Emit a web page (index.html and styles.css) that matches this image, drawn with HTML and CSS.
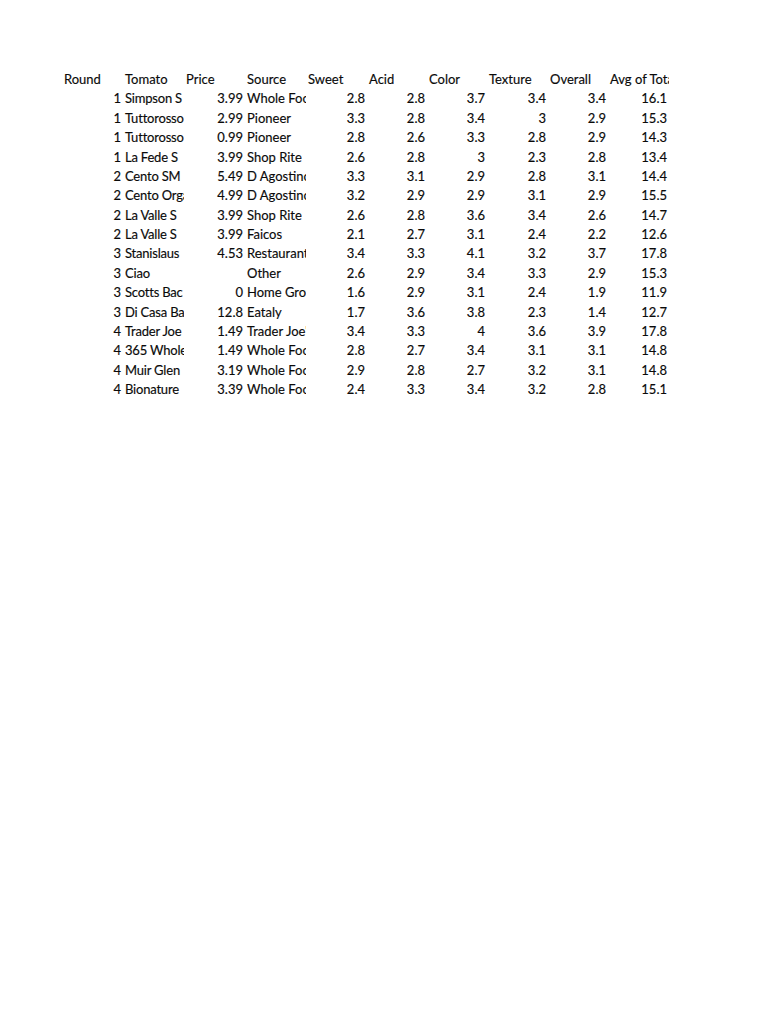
FILE: index.html
```html
<!DOCTYPE html>
<html lang="en">
<head>
<meta charset="utf-8">
<title>Tomato Tasting</title>
<link rel="stylesheet" href="styles.css">
</head>
<body>
<table class="sheet">
  <colgroup>
    <col class="w61"><col class="w61"><col class="w61"><col class="w61"><col class="w61">
    <col class="w60"><col class="w60"><col class="w61"><col class="w60"><col class="w61">
  </colgroup>
  <thead>
    <tr>
      <th>Round</th><th>Tomato</th><th>Price</th><th>Source</th><th>Sweet</th>
      <th>Acid</th><th>Color</th><th>Texture</th><th>Overall</th><th>Avg of Total</th>
    </tr>
  </thead>
  <tbody>
    <tr><td class="n">1</td><td class="t">Simpson S</td><td class="n">3.99</td><td>Whole Foods</td><td class="n">2.8</td><td class="n">2.8</td><td class="n">3.7</td><td class="n">3.4</td><td class="n">3.4</td><td class="n">16.1</td></tr>
    <tr><td class="n">1</td><td class="t">Tuttorosso</td><td class="n">2.99</td><td>Pioneer</td><td class="n">3.3</td><td class="n">2.8</td><td class="n">3.4</td><td class="n">3</td><td class="n">2.9</td><td class="n">15.3</td></tr>
    <tr><td class="n">1</td><td class="t">Tuttorosso</td><td class="n">0.99</td><td>Pioneer</td><td class="n">2.8</td><td class="n">2.6</td><td class="n">3.3</td><td class="n">2.8</td><td class="n">2.9</td><td class="n">14.3</td></tr>
    <tr><td class="n">1</td><td class="t">La Fede S</td><td class="n">3.99</td><td>Shop Rite</td><td class="n">2.6</td><td class="n">2.8</td><td class="n">3</td><td class="n">2.3</td><td class="n">2.8</td><td class="n">13.4</td></tr>
    <tr><td class="n">2</td><td class="t">Cento SM</td><td class="n">5.49</td><td>D Agostino</td><td class="n">3.3</td><td class="n">3.1</td><td class="n">2.9</td><td class="n">2.8</td><td class="n">3.1</td><td class="n">14.4</td></tr>
    <tr><td class="n">2</td><td class="t">Cento Organic</td><td class="n">4.99</td><td>D Agostino</td><td class="n">3.2</td><td class="n">2.9</td><td class="n">2.9</td><td class="n">3.1</td><td class="n">2.9</td><td class="n">15.5</td></tr>
    <tr><td class="n">2</td><td class="t">La Valle S</td><td class="n">3.99</td><td>Shop Rite</td><td class="n">2.6</td><td class="n">2.8</td><td class="n">3.6</td><td class="n">3.4</td><td class="n">2.6</td><td class="n">14.7</td></tr>
    <tr><td class="n">2</td><td class="t">La Valle S</td><td class="n">3.99</td><td>Faicos</td><td class="n">2.1</td><td class="n">2.7</td><td class="n">3.1</td><td class="n">2.4</td><td class="n">2.2</td><td class="n">12.6</td></tr>
    <tr><td class="n">3</td><td class="t">Stanislaus</td><td class="n">4.53</td><td>Restaurant</td><td class="n">3.4</td><td class="n">3.3</td><td class="n">4.1</td><td class="n">3.2</td><td class="n">3.7</td><td class="n">17.8</td></tr>
    <tr><td class="n">3</td><td class="t">Ciao</td><td class="n"></td><td>Other</td><td class="n">2.6</td><td class="n">2.9</td><td class="n">3.4</td><td class="n">3.3</td><td class="n">2.9</td><td class="n">15.3</td></tr>
    <tr><td class="n">3</td><td class="t">Scotts Bac</td><td class="n">0</td><td>Home Grown</td><td class="n">1.6</td><td class="n">2.9</td><td class="n">3.1</td><td class="n">2.4</td><td class="n">1.9</td><td class="n">11.9</td></tr>
    <tr><td class="n">3</td><td class="t">Di Casa Bar</td><td class="n">12.8</td><td>Eataly</td><td class="n">1.7</td><td class="n">3.6</td><td class="n">3.8</td><td class="n">2.3</td><td class="n">1.4</td><td class="n">12.7</td></tr>
    <tr><td class="n">4</td><td class="t">Trader Joe</td><td class="n">1.49</td><td>Trader Joe's</td><td class="n">3.4</td><td class="n">3.3</td><td class="n">4</td><td class="n">3.6</td><td class="n">3.9</td><td class="n">17.8</td></tr>
    <tr><td class="n">4</td><td class="t">365 Whole</td><td class="n">1.49</td><td>Whole Foods</td><td class="n">2.8</td><td class="n">2.7</td><td class="n">3.4</td><td class="n">3.1</td><td class="n">3.1</td><td class="n">14.8</td></tr>
    <tr><td class="n">4</td><td class="t">Muir Glen</td><td class="n">3.19</td><td>Whole Foods</td><td class="n">2.9</td><td class="n">2.8</td><td class="n">2.7</td><td class="n">3.2</td><td class="n">3.1</td><td class="n">14.8</td></tr>
    <tr><td class="n">4</td><td class="t">Bionature</td><td class="n">3.39</td><td>Whole Foods</td><td class="n">2.4</td><td class="n">3.3</td><td class="n">3.4</td><td class="n">3.2</td><td class="n">2.8</td><td class="n">15.1</td></tr>
  </tbody>
</table>
</body>
</html>
```

FILE: styles.css
```css
html, body {
  margin: 0;
  padding: 0;
  background: #ffffff;
}

body {
  padding: 70px 0 0 62px;
  font-family: Lato, "Open Sans", sans-serif;
  font-size: 13px;
  color: #0a0a0a;
}

.sheet {
  border-collapse: collapse;
  table-layout: fixed;
  width: 607px;
}

.w61 { width: 61px; }
.w60 { width: 60px; }

.sheet th,
.sheet td {
  height: 19.375px;
  line-height: 19.375px;
  padding: 0 2px 0 2px;
  white-space: nowrap;
  overflow: hidden;
  text-align: left;
  font-weight: 400;
  vertical-align: middle;
  -webkit-text-stroke: 0.15px currentColor;
}

.sheet td.t {
  letter-spacing: -0.2px;
}

.sheet td.n {
  text-align: right;
}
```
